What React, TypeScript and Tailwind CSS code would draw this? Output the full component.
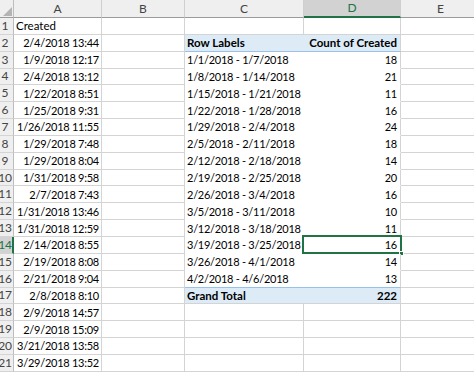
import React from "react";

const colA: string[] = [
  "Created",
  "2/4/2018 13:44",
  "1/9/2018 12:17",
  "2/4/2018 13:12",
  "1/22/2018 8:51",
  "1/25/2018 9:31",
  "1/26/2018 11:55",
  "1/29/2018 7:48",
  "1/29/2018 8:04",
  "1/31/2018 9:58",
  "2/7/2018 7:43",
  "1/31/2018 13:46",
  "1/31/2018 12:59",
  "2/14/2018 8:55",
  "2/19/2018 8:08",
  "2/21/2018 9:04",
  "2/8/2018 8:10",
  "2/9/2018 14:57",
  "2/9/2018 15:09",
  "3/21/2018 13:58",
  "3/29/2018 13:52",
];

const pivot: [string, string][] = [
  ["Row Labels", "Count of Created"],
  ["1/1/2018 - 1/7/2018", "18"],
  ["1/8/2018 - 1/14/2018", "21"],
  ["1/15/2018 - 1/21/2018", "11"],
  ["1/22/2018 - 1/28/2018", "16"],
  ["1/29/2018 - 2/4/2018", "24"],
  ["2/5/2018 - 2/11/2018", "18"],
  ["2/12/2018 - 2/18/2018", "14"],
  ["2/19/2018 - 2/25/2018", "20"],
  ["2/26/2018 - 3/4/2018", "16"],
  ["3/5/2018 - 3/11/2018", "10"],
  ["3/12/2018 - 3/18/2018", "11"],
  ["3/19/2018 - 3/25/2018", "16"],
  ["3/26/2018 - 4/1/2018", "14"],
  ["4/2/2018 - 4/6/2018", "13"],
  ["Grand Total", "222"],
];

function RowHeader({ n }: { n: number }) {
  const sel = n === 14;
  return (
    <div
      className={
        "w-[14px] shrink-0 overflow-hidden flex items-center border-b border-b-[#d4d4d4] " +
        (sel
          ? "bg-[#d2d2d2] text-[#217346] border-r-2 border-r-[#217346]"
          : "bg-[#efefef] text-[#444444] border-r border-r-[#bdbdbd]")
      }
    >
      <div className="w-[10px] shrink-0 flex justify-center text-[12px] tracking-[-0.2px] leading-none whitespace-nowrap">
        {n}
      </div>
    </div>
  );
}

export default function App() {
  const rows = Array.from({ length: 21 }, (_, i) => i + 1);
  return (
    <div
      className="w-[474px] h-[372px] overflow-hidden bg-white text-black"
      style={{ fontFamily: "Lato, 'Open Sans', sans-serif" }}
    >
      {/* column header row */}
      <div className="flex h-[18px] text-[12px] text-[#444444]">
        <div className="w-[14px] shrink-0 bg-[#efefef] border-r border-r-[#bdbdbd] border-b border-b-[#9b9b9b] relative">
          <svg className="absolute right-[1px] bottom-[1px]" width="9" height="9" viewBox="0 0 9 9">
            <polygon points="9,0 9,9 0,9" fill="#b4b4b4" />
          </svg>
        </div>
        <div className="w-[88px] shrink-0 bg-[#efefef] border-r border-r-[#cfcfcf] border-b border-b-[#9b9b9b] flex items-center justify-center">A</div>
        <div className="w-[83px] shrink-0 bg-[#efefef] border-r border-r-[#cfcfcf] border-b border-b-[#9b9b9b] flex items-center justify-center">B</div>
        <div className="w-[119px] shrink-0 bg-[#efefef] border-r border-r-[#cfcfcf] border-b border-b-[#9b9b9b] flex items-center justify-center">C</div>
        <div className="w-[97px] shrink-0 bg-[#d2d2d2] border-r border-r-[#cfcfcf] border-b-2 border-b-[#217346] text-[#217346] flex items-center justify-center">D</div>
        <div className="w-[80px] shrink-0 bg-[#efefef] border-r border-r-[#cfcfcf] border-b border-b-[#9b9b9b] flex items-center justify-center">E</div>
      </div>

      {rows.map((n) => {
        const inPivot = n >= 2 && n <= 17;
        const p = inPivot ? pivot[n - 2] : null;
        const isHead = n === 2;
        const isTotal = n === 17;
        const blue = isHead || isTotal;
        const pivotBorder =
          n === 2 || n === 16
            ? "border-b border-b-[#9bc2e6]"
            : n === 17
            ? "border-b border-b-[#d4d4d4]"
            : "border-b border-b-transparent";
        return (
          <div key={n} className="flex h-[16.85px] text-[11px] tracking-[-0.25px] leading-none">
            <RowHeader n={n} />
            <div
              className={
                "w-[88px] shrink-0 border-r border-b border-[#d4d4d4] flex items-center whitespace-nowrap overflow-hidden " +
                (n === 1 ? "justify-start pl-[2px] text-[11.5px] tracking-normal" : "justify-end pr-[2px]")
              }
            >
              {colA[n - 1]}
            </div>
            <div className="w-[83px] shrink-0 border-r border-b border-[#d4d4d4]" />
            {inPivot ? (
              <>
                <div
                  className={
                    "w-[119px] shrink-0 flex items-center pl-[2px] whitespace-nowrap " +
                    pivotBorder +
                    (blue ? " bg-[#ddebf7] font-bold text-[11.5px] tracking-normal" : "")
                  }
                >
                  {p![0]}
                </div>
                <div
                  className={
                    "w-[97px] shrink-0 flex items-center justify-end pr-[3px] whitespace-nowrap border-r border-r-[#d4d4d4] relative " +
                    pivotBorder +
                    (blue ? " bg-[#ddebf7] font-bold text-[11.5px] tracking-normal" : "")
                  }
                >
                  {p![1]}
                  {n === 14 && (
                    <div className="absolute left-[-2px] top-[-2px] right-[-2px] bottom-[-1px] border-2 border-[#217346]">
                      <div className="absolute right-[-4px] bottom-[-4px] w-[5px] h-[5px] bg-[#217346] border border-white" />
                    </div>
                  )}
                </div>
              </>
            ) : (
              <>
                <div className="w-[119px] shrink-0 border-r border-b border-[#d4d4d4]" />
                <div className="w-[97px] shrink-0 border-r border-b border-[#d4d4d4]" />
              </>
            )}
            <div className="w-[80px] shrink-0 border-r border-b border-[#d4d4d4]" />
          </div>
        );
      })}
    </div>
  );
}
